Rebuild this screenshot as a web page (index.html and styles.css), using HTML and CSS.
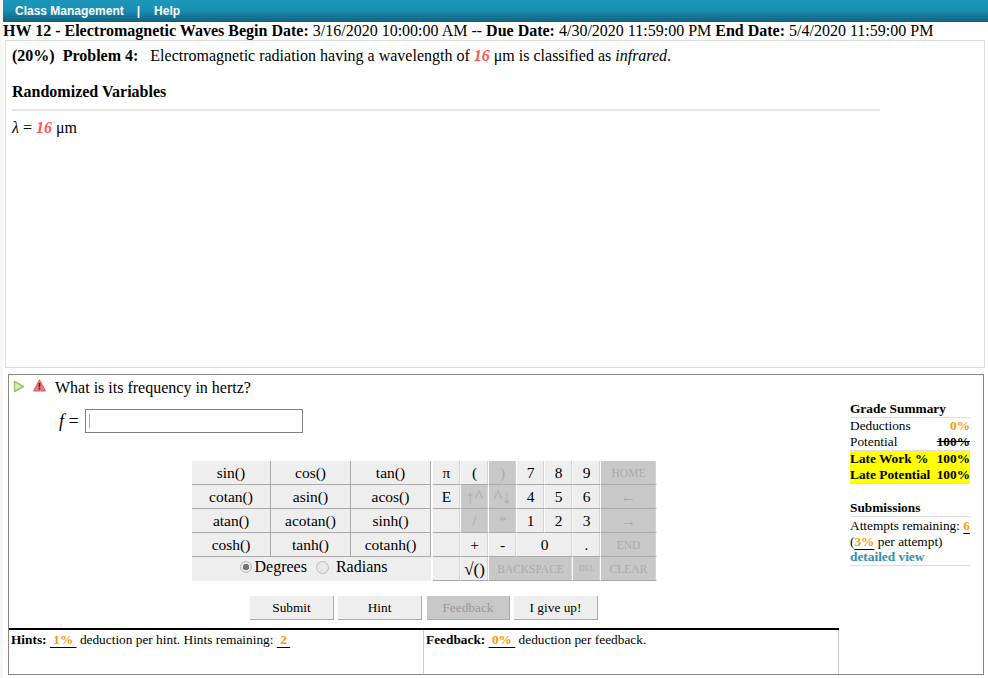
FILE: index.html
```html
<!DOCTYPE html>
<html lang="en">
<head>
<meta charset="utf-8">
<title>HW 12 - Electromagnetic Waves</title>
<link rel="stylesheet" href="styles.css">
</head>
<body>
<nav class="topbar"><a>Class Management</a><span class="sep">|</span><a>Help</a></nav>
<div class="hw"><b>HW 12 - Electromagnetic Waves Begin Date:</b> 3/16/2020 10:00:00 AM -- <b>Due Date:</b> 4/30/2020 11:59:00 PM <b>End Date:</b> 5/4/2020 11:59:00 PM</div>
<section class="problem">
  <p class="statement"><b>(20%)&nbsp; Problem 4:</b>&nbsp;&nbsp; Electromagnetic radiation having a wavelength of <i class="var">16</i> μm is classified as <i>infrared</i>.</p>
  <h3 class="rv">Randomized Variables</h3>
  <hr class="rule">
  <p class="vars"><i>λ</i> = <i class="var">16</i> μm</p>
</section>
<section class="question">
  <div class="work">
    <div class="qline">
      <svg class="ico-play" viewBox="0 0 12 13" width="12" height="13"><path d="M1.5 1.5 L10.5 6.5 L1.5 11.5 Z" fill="#dcebb4" stroke="#a3bf72" stroke-width="1.5" stroke-linejoin="round"/></svg>
      <svg class="ico-warn" viewBox="0 0 13 13" width="13" height="13"><path d="M6.5 1 L12.2 11.8 L0.8 11.8 Z" fill="#f0777f" stroke="#e0606a" stroke-width="1.2" stroke-linejoin="round"/><rect x="5.7" y="4" width="1.6" height="4.2" fill="#6a0f18"/><rect x="5.7" y="9" width="1.6" height="1.6" fill="#6a0f18"/></svg>
      <span class="qtext">What is its frequency in hertz?</span>
    </div>
    <div class="answer"><span class="flabel"><i>f</i> =</span><div class="field"><span class="caret"></span></div></div>
    <div class="pad">
      <div class="funcs">
        <div class="key">sin()</div><div class="key">cos()</div><div class="key">tan()</div>
        <div class="key">cotan()</div><div class="key">asin()</div><div class="key">acos()</div>
        <div class="key">atan()</div><div class="key">acotan()</div><div class="key">sinh()</div>
        <div class="key">cosh()</div><div class="key">tanh()</div><div class="key">cotanh()</div>
        <div class="modes"><span class="radio on"></span>Degrees<span class="radio off"></span>Radians</div>
      </div>
      <div class="keys">
        <div class="key">π</div><div class="key">(</div><div class="key dis">)</div><div class="key">7</div><div class="key">8</div><div class="key">9</div><div class="key dis sm">HOME</div>
        <div class="key">E</div><div class="key dis arr">↑^</div><div class="key dis arr">^↓</div><div class="key">4</div><div class="key">5</div><div class="key">6</div><div class="key dis">←</div>
        <div class="key"></div><div class="key dis">/</div><div class="key dis">*</div><div class="key">1</div><div class="key">2</div><div class="key">3</div><div class="key dis">→</div>
        <div class="key"></div><div class="key">+</div><div class="key">-</div><div class="key two">0</div><div class="key">.</div><div class="key dis sm">END</div>
        <div class="key"></div><div class="key sqrt">√()</div><div class="key dis sm three">BACKSPACE</div><div class="key dis xs">DEL</div><div class="key dis sm">CLEAR</div>
      </div>
    </div>
    <div class="actions">
      <button class="btn b-submit" type="button">Submit</button>
      <button class="btn b-hint" type="button">Hint</button>
      <button class="btn b-fb" type="button" disabled>Feedback</button>
      <button class="btn b-up" type="button">I give up!</button>
    </div>
    <div class="notes">
      <div class="note n-hints"><b>Hints:</b> <u class="val">&nbsp;1%&nbsp;</u> deduction per hint. Hints remaining: <u class="val">&nbsp;2&nbsp;</u></div>
      <div class="note n-fb"><b>Feedback:</b> <u class="val">&nbsp;0%&nbsp;</u> deduction per feedback.</div>
    </div>
  </div>
  <aside class="side">
    <h4 class="sh">Grade Summary</h4>
    <div class="row"><span>Deductions</span><b class="or">0%</b></div>
    <div class="row last"><span>Potential</span><s class="struck">100%</s></div>
    <div class="late">
      <div class="row"><b>Late Work %</b><b>100%</b></div>
      <div class="row"><b>Late Potential</b><b>100%</b></div>
    </div>
    <h4 class="sh sub">Submissions</h4>
    <div class="attempts">Attempts remaining: <u class="val">6</u><br>(<u class="val">3%</u> per attempt)<br><a class="detail">detailed view</a></div>
  </aside>
</section>
</body>
</html>
```
FILE: styles.css
```css
* { box-sizing: border-box; }
html, body { margin: 0; padding: 0; }
body {
  width: 988px; height: 678px; overflow: hidden;
  font-family: "Liberation Serif", "Times New Roman", serif;
  color: #000; background: #fff;
  border-left: 3px solid #f6f6f6;
}
.topbar {
  height: 22px; display: flex; align-items: center; padding-left: 12px;
  background: linear-gradient(#1a97bb, #1a90b2 45%, #12607f);
  color: #fff; font: bold 12px/22px "Liberation Sans", Arial, sans-serif;
}
.sep { margin: 0 14px 0 13px; }
.hw { height: 18px; font-size: 16px; line-height: 18px; white-space: nowrap; }
.problem {
  margin-left: 2px; width: 980px; height: 328px;
  border: 1px solid #ddd; padding: 6px 6px 0;
}
.statement { margin: 0; font-size: 16px; line-height: 17px; }
.var { color: #f55; font-weight: 700; }
.rv { margin: 19px 0 0; font-size: 16px; line-height: 17px; }
.rule { margin: 9px 0 0; width: 868px; height: 2px; border: 0; background: #e6e6e6; }
.vars { margin: 8px 0 0; font-size: 16px; line-height: 17px; }
.question {
  margin: 6px 0 0 5px; width: 976px; height: 301px;
  border: 1px solid #888; display: flex;
}
.work { width: 830px; flex: none; padding-top: 4px; }
.qline { height: 17px; display: flex; align-items: flex-start; padding-left: 4px; }
.ico-play { margin-top: 1px; }
.ico-warn { margin-left: 8px; }
.qtext { margin-left: 9px; font-size: 16px; line-height: 17px; }
.answer { display: flex; align-items: center; margin: 13px 0 0 50px; height: 24px; }
.flabel { width: 26px; font-size: 18px; }
.field { width: 218px; height: 24px; border: 1px solid #808080; padding: 4px 0 0 3px; }
.caret { display: block; width: 1px; height: 14px; background: #f08a9a; }
.pad { display: flex; margin: 28px 0 0 183px; background: #fff; }
.funcs { display: grid; grid-template-columns: 79px 80px 80px; grid-auto-rows: 24px; width: 239px; margin-right: 2px; }
.keys { display: grid; grid-template-columns: 28px 28px 28px 28px 28px 28px 56px; grid-auto-rows: 24px; }
.key {
  display: flex; align-items: center; justify-content: center;
  background: #eee; border-right: 1px solid #aaa; border-bottom: 1px solid #aaa;
  font-size: 15.5px; line-height: 1; white-space: nowrap; padding-top: 1px;
}
.keys .key { border-right: 1px solid #fff; border-bottom: 1px solid #aaa; box-shadow: inset -1px 0 0 #d4d4d4; }
.key.dis { background: #c8c8c8; color: #aaa; }
.key.arr { font-size: 18px; }
.key.sm { font-size: 11.5px; padding-top: 2px; }
.key.xs { font-size: 8px; }
.key.two { grid-column: span 2; }
.key.three { grid-column: span 3; }
.key.sqrt { font-size: 17px; }
.modes {
  grid-column: span 3; background: #eee; display: flex; align-items: center; justify-content: center;
  font-size: 16px; padding: 0 0 4px 4px;
}
.radio { width: 12px; height: 12px; border-radius: 50%; border: 1px solid #bbb; background: #e8e8e8; margin-right: 3px; }
.radio.off { margin-left: 9px; margin-right: 7px; width: 13px; height: 13px; }
.radio.on { background: radial-gradient(circle, #777 0 3px, #e8e8e8 3.5px); }
.actions { display: flex; margin: 15px 0 0 241px; height: 24px; }
.btn {
  padding: 0; height: 24px; background: #eee; font: 13.33px "Liberation Serif", serif; color: #000;
  border: 0; border-right: 1px solid #aaa; border-bottom: 1px solid #aaa;
}
.btn[disabled] { background: #c8c8c8; color: #999; }
.b-submit { width: 84px; margin-right: 4px; }
.b-hint { width: 84px; margin-right: 5px; }
.b-fb { width: 83px; margin-right: 4px; }
.b-up { width: 84px; }
.notes { display: flex; margin-top: 8px; height: 46px; border-top: 2px solid #000; }
.note { font-size: 13.33px; line-height: 16px; padding: 2px 2px; white-space: nowrap; }
.n-hints { width: 415px; border-right: 1px solid #ccc; }
.n-fb { width: 415px; border-right: 1px solid #ccc; }
.val { color: #f90; font-weight: 700; text-decoration-color: #000; text-underline-offset: 3px; }
.side { flex: 1; padding: 26px 0 0 11px; font-size: 13.33px; line-height: 16px; }
.side > * { width: 120px; }
.sh { margin: 0; font-size: 13.33px; border-bottom: 1px solid #ddd; line-height: 16px; }
.row { display: flex; justify-content: space-between; white-space: nowrap; }
.row.last { border-bottom: 1px solid #ddd; }
.struck { font-weight: 700; }
.or { color: #f90; }
.late { background: #ff0; border-bottom: 1px solid #ddd; }
.sub { margin-top: 16px; }
.attempts { border-bottom: 1px solid #ddd; line-height: 15.5px; padding-top: 1px; }
.detail { color: #2f8fb0; font-weight: 700; }
```
